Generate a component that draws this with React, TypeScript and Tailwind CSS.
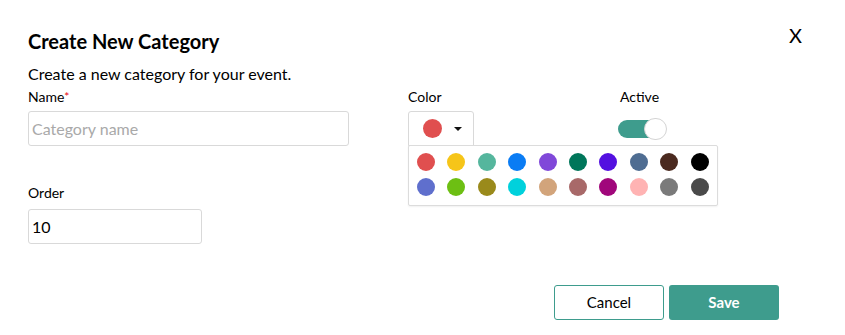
import { useState } from "react";

const palette = [
  "#e04f4f", "#f6c519", "#55b69d", "#0a7cf4", "#8048d9", "#00765a", "#5310e0", "#4f6d92", "#4b2a1f", "#000000",
  "#5f6fcd", "#6dbf13", "#9a8a1b", "#00d1dc", "#d2a47b", "#a86969", "#a0077b", "#ffb3b3", "#7a7a7a", "#4a4a4a",
];

export default function App() {
  const [color] = useState(palette[0]);
  const [active, setActive] = useState(true);

  return (
    <div className="w-[845px] h-[335px] bg-white font-[Lato,sans-serif] text-[#222] relative">
      <div className="pt-[27px] pl-[28px] pr-[43px]">
        {/* Header */}
        <div className="flex justify-between items-start">
          <h2 className="text-[20px] leading-[28px] font-bold text-black">Create New Category</h2>
          <button className="text-[20px] leading-[28px] -mt-[6px] text-black">X</button>
        </div>
        <p className="mt-[7px] text-[16px] leading-[24px] text-black">Create a new category for your event.</p>

        {/* Form */}
        <div className="flex mt-[1px]">
          <div className="w-[321px]">
            <label className="block text-[14px] leading-[20px] text-black">
              Name<span className="text-red-600 text-[12px] align-top">*</span>
            </label>
            <input
              placeholder="Category name"
              className="mt-[4px] w-full h-[35px] border border-[#d9d9d9] rounded-[3px] px-[3px] text-[16px] placeholder:text-[#a9a9a9] outline-none"
            />
            <label className="block mt-[37px] text-[14px] leading-[20px] text-black">Order</label>
            <input
              defaultValue="10"
              className="mt-[6px] w-[174px] h-[35px] border border-[#d9d9d9] rounded-[3px] px-[3px] text-[16px] text-black outline-none"
            />
          </div>

          <div className="ml-[59px] w-[210px]">
            <label className="block text-[14px] leading-[20px] text-black">Color</label>
            <div className="relative mt-[4px] w-[66px]">
              <button className="w-[66px] h-[35px] border border-[#d9d9d9] rounded-t-[3px] flex items-center pl-[14px] gap-[12px]">
                <span className="w-[19px] h-[19px] rounded-full" style={{ backgroundColor: color }} />
                <svg width="8" height="4" viewBox="0 0 8 4">
                  <path d="M0 0h8L4 4z" fill="#111" />
                </svg>
              </button>
              <div className="absolute left-0 top-full -mt-px w-[310px] border border-[#dcdcdc] rounded-[2px] bg-white shadow-[0_1px_2px_rgba(0,0,0,0.06)] px-[8px] pt-[7px] pb-[9px] grid grid-cols-10 gap-x-[12px] gap-y-[7px]">
                {palette.map((c) => (
                  <span key={c} className="w-[18px] h-[18px] rounded-full" style={{ backgroundColor: c }} />
                ))}
              </div>
            </div>
          </div>

          <div>
            <label className="block pl-[2px] text-[14px] leading-[20px] text-black">Active</label>
            <button
              onClick={() => setActive(!active)}
              className="relative mt-[13px] w-[45px] h-[18px] rounded-full bg-[#3e9c8d] block"
            >
              <span className="absolute right-[-4px] top-[-2px] w-[23px] h-[22px] rounded-full bg-white border border-[#d4d4d4]" />
            </button>
          </div>
        </div>

        {/* Footer */}
        <div className="flex justify-end gap-[5px] mt-[41px] pr-[23px]">
          <button className="w-[110px] h-[35px] border border-[#3e9c8d] rounded-[3px] text-[15px] text-black">Cancel</button>
          <button className="w-[110px] h-[35px] bg-[#3e9c8d] rounded-[3px] text-[15px] font-bold text-white">Save</button>
        </div>
      </div>
    </div>
  );
}
